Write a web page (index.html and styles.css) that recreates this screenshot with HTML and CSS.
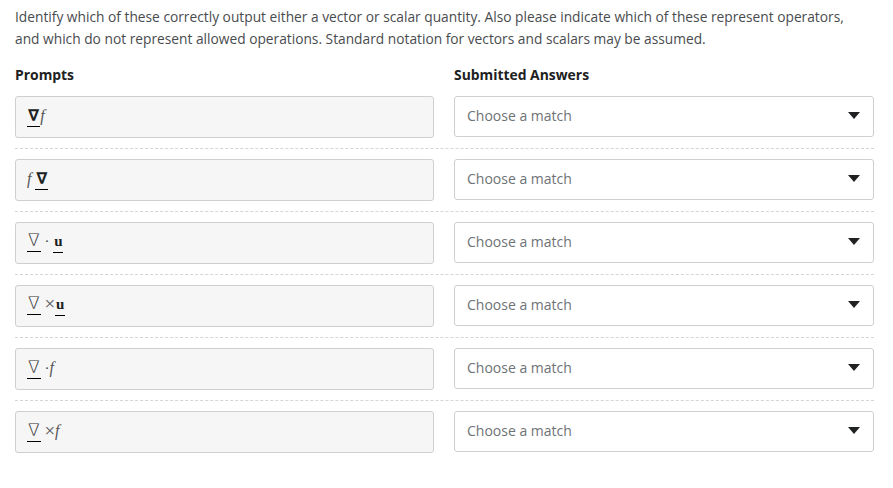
FILE: index.html
```html
<!DOCTYPE html>
<html>
<head>
<meta charset="utf-8">
<link rel="stylesheet" href="styles.css">
</head>
<body>
<div class="page">
  <p class="intro">Identify which of these correctly output either a vector or scalar quantity. Also please indicate which of these represent operators, and which do not represent allowed operations. Standard notation for vectors and scalars may be assumed.</p>
  <div class="heads">
    <div class="head">Prompts</div>
    <div class="head">Submitted Answers</div>
  </div>
  <div class="row">
    <div class="prompt"><span class="m"><span class="vec nb b">∇</span><i>f</i></span></div>
    <div class="select"><span>Choose a match</span><svg class="caret" width="12" height="8" viewBox="0 0 12 8"><path d="M0 0H12L6 7Z" fill="#202122"/></svg></div>
  </div>
  <div class="row">
    <div class="prompt"><span class="m"><i>f</i> <span class="vec nb b">∇</span></span></div>
    <div class="select"><span>Choose a match</span><svg class="caret" width="12" height="8" viewBox="0 0 12 8"><path d="M0 0H12L6 7Z" fill="#202122"/></svg></div>
  </div>
  <div class="row">
    <div class="prompt"><span class="m"><span class="vec nb">∇</span> <span class="op">·</span> <span class="vec b">u</span></span></div>
    <div class="select"><span>Choose a match</span><svg class="caret" width="12" height="8" viewBox="0 0 12 8"><path d="M0 0H12L6 7Z" fill="#202122"/></svg></div>
  </div>
  <div class="row">
    <div class="prompt"><span class="m"><span class="vec nb">∇</span> <span class="op x">×</span><span class="vec b">u</span></span></div>
    <div class="select"><span>Choose a match</span><svg class="caret" width="12" height="8" viewBox="0 0 12 8"><path d="M0 0H12L6 7Z" fill="#202122"/></svg></div>
  </div>
  <div class="row">
    <div class="prompt"><span class="m"><span class="vec nb">∇</span> <span class="op">·</span><i>f</i></span></div>
    <div class="select"><span>Choose a match</span><svg class="caret" width="12" height="8" viewBox="0 0 12 8"><path d="M0 0H12L6 7Z" fill="#202122"/></svg></div>
  </div>
  <div class="row last">
    <div class="prompt"><span class="m"><span class="vec nb">∇</span> <span class="op x">×</span><i>f</i></span></div>
    <div class="select"><span>Choose a match</span><svg class="caret" width="12" height="8" viewBox="0 0 12 8"><path d="M0 0H12L6 7Z" fill="#202122"/></svg></div>
  </div>
</div>
</body>
</html>
```
FILE: styles.css
```css
html, body {
  margin: 0;
  padding: 0;
  background: #ffffff;
}
.page {
  padding: 6px 19px 0 15px;
  font-family: "Open Sans", sans-serif;
  color: #494c4e;
}
.intro {
  margin: 0;
  max-width: 850px;
  font-size: 13.75px;
  line-height: 22px;
}
.heads {
  display: grid;
  grid-template-columns: 419px 420px;
  column-gap: 20px;
  margin-top: 15px;
  margin-bottom: 12px;
}
.head {
  font-weight: 700;
  font-size: 13.9px;
  line-height: 19px;
  color: #202122;
}
.row {
  display: grid;
  grid-template-columns: 419px 420px;
  column-gap: 20px;
  padding-bottom: 10px;
  border-bottom: 1px dashed #d3d6d8;
  margin-bottom: 10px;
}
.row.last {
  border-bottom: none;
}
.prompt {
  box-sizing: border-box;
  height: 42px;
  border: 1px solid #cdd0d2;
  border-radius: 3px;
  background: #f6f6f6;
  padding: 0 11px;
  display: flex;
  align-items: center;
}
.m {
  font-family: "Liberation Serif", serif;
  font-size: 15px;
  color: #202122;
  line-height: 20px;
  position: relative;
  top: -1px;
}
.m i {
  font-size: 16px;
  color: #555;
}
.op {
  font-size: 15px;
  color: #444;
}
.op.x {
  font-size: 19px;
  line-height: 15px;
  color: #555;
  position: relative;
  top: 1px;
}
.vec {
  display: inline-block;
  border-bottom: 1px solid #000;
  line-height: 15px;
  padding: 0 1px 3px;
  font-weight: 400;
}
.nb {
  font-family: "DejaVu Sans", sans-serif;
  font-weight: 200;
  font-size: 17px;
  color: #333;
}
.vec.b {
  font-weight: 700;
}
.nb.b {
  font-size: 16px;
  color: #202122;
}
.select {
  box-sizing: border-box;
  height: 41px;
  border: 1px solid #cdd0d2;
  border-radius: 3px;
  background: #ffffff;
  padding: 0 13px 2px 12px;
  display: flex;
  align-items: center;
  justify-content: space-between;
  font-size: 14px;
  color: #6e7376;
}
.caret {
  display: block;
}
```
